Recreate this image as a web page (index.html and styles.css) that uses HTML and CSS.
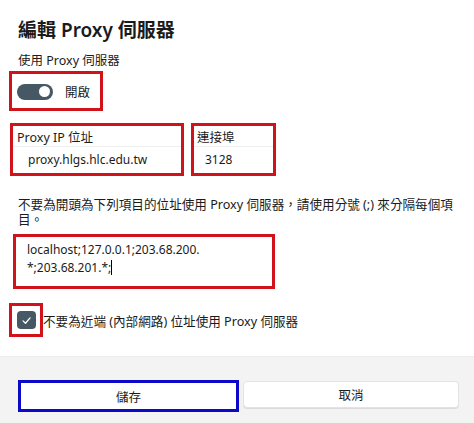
FILE: index.html
```html
<!DOCTYPE html>
<html lang="zh-TW">
<head>
  <meta charset="UTF-8">
  <title>編輯 Proxy 伺服器</title>
  <link rel="stylesheet" href="styles.css">
</head>
<body>
  <div class="dialog">
    <div class="content">
      <h1 class="title">編輯 Proxy 伺服器</h1>
      <div class="label sub">使用 Proxy 伺服器</div>

      <div class="mark toggle-row">
        <span class="toggle"><span class="knob"></span></span>
        <span class="toggle-text">開啟</span>
      </div>

      <div class="fields">
        <div class="mark field field-ip">
          <div class="label">Proxy IP 位址</div>
          <div class="input">proxy.hlgs.hlc.edu.tw</div>
        </div>
        <div class="mark field field-port">
          <div class="label">連接埠</div>
          <div class="input">3128</div>
        </div>
      </div>

      <p class="desc">不要為開頭為下列項目的位址使用 Proxy 伺服器，請使用分號 (;) 來分隔每個項目。</p>

      <div class="mark textarea">
        localhost;127.0.0.1;203.68.200.<br>*;203.68.201.*;<span class="caret"></span>
      </div>

      <div class="check-row">
        <span class="mark check-mark">
          <span class="checkbox">
            <svg width="11" height="11" viewBox="0 0 12 12"><path d="M2.2 6.4 L4.9 9 L9.9 3.2" fill="none" stroke="#fff" stroke-width="1.4" stroke-linecap="round" stroke-linejoin="round"/></svg>
          </span>
        </span>
        <span class="check-text">不要為近端 (內部網路) 位址使用 Proxy 伺服器</span>
      </div>
    </div>

    <div class="footer">
      <button class="btn btn-save">儲存</button>
      <button class="btn btn-cancel">取消</button>
    </div>
  </div>
</body>
</html>
```

FILE: styles.css
```css
:root {
  --red: #d0131b;
  --blue: #0a0ac8;
  --accent: #465864;
  --text: #1b1b1b;
}

body {
  margin: 0;
  background: #fff;
  color: var(--text);
  font-family: "Noto Sans", "Noto Sans CJK TC", sans-serif;
  font-size: 13px;
}

.dialog {
  width: 474px;
  height: 423px;
  display: flex;
  flex-direction: column;
}

.content {
  padding: 16px 8px 19px 18px;
  flex: 1;
}

.title {
  margin: 0;
  font-size: 19px;
  line-height: 28px;
  font-weight: 600;
}

.label {
  font-size: 12.5px;
  line-height: 16px;
}

.sub {
  margin-top: 8px;
  line-height: 18px;
}

.mark {
  border: 3px solid var(--red);
  box-sizing: border-box;
}

.toggle-row {
  margin: 1px 0 0 -9px;
  width: 94px;
  height: 40px;
  display: flex;
  align-items: center;
  padding: 1px 0 0 5px;
}

.toggle {
  width: 36px;
  height: 16px;
  border-radius: 8px;
  background: var(--accent);
  display: flex;
  align-items: center;
  justify-content: flex-end;
  padding-right: 3px;
  box-sizing: border-box;
}

.knob {
  width: 11px;
  height: 11px;
  border-radius: 50%;
  background: #fff;
}

.toggle-text {
  margin-left: 12px;
  font-size: 12.5px;
}

.fields {
  display: flex;
  gap: 7px;
  margin: 12px 0 0 -8px;
}

.field {
  height: 53px;
  padding-top: 4px;
}

.field .label {
  padding-left: 4px;
}

.field-ip {
  width: 174px;
}

.field-port {
  width: 85px;
}

.field-port .label {
  padding-left: 3px;
}

.input {
  height: 27px;
  line-height: 26px;
  border-top: 1px solid #efefef;
  padding-left: 15px;
  font-size: 12px;
}

.field-port .input {
  padding-left: 11px;
}

.desc {
  margin: 21px 0 0;
  font-size: 12.6px;
  line-height: 15px;
}

.textarea {
  margin: 7px 0 0 -5px;
  width: 262px;
  height: 55px;
  padding: 4px 0 0 11px;
  line-height: 18px;
  font-size: 12px;
}

.caret {
  display: inline-block;
  width: 1px;
  height: 15px;
  background: #000;
  vertical-align: -3px;
}

.check-row {
  margin: 14px 0 0 -9px;
  display: flex;
  align-items: center;
}

.check-mark {
  width: 34px;
  height: 34px;
  display: flex;
  align-items: center;
  padding-left: 5px;
}

.checkbox {
  width: 19px;
  height: 18px;
  border-radius: 4px;
  background: var(--accent);
  display: flex;
  align-items: center;
  justify-content: center;
}

.check-text {
  font-size: 12.6px;
}

.footer {
  background: #f3f3f3;
  border-top: 1px solid #ececec;
  padding: 23px 15px 12px 18px;
  display: flex;
  gap: 4px;
  align-items: flex-start;
}

.btn {
  font-family: inherit;
  font-size: 12.5px;
  color: var(--text);
  background: #fff;
  border-radius: 4px;
  cursor: pointer;
}

.btn-save {
  width: 221px;
  height: 32px;
  border: 3px solid var(--blue);
  border-radius: 0;
}

.btn-cancel {
  flex: 1;
  height: 27px;
  margin-top: 1px;
  border: 1px solid #e3e3e3;
  box-shadow: 0 1px 0 #dcdcdc;
}
```
